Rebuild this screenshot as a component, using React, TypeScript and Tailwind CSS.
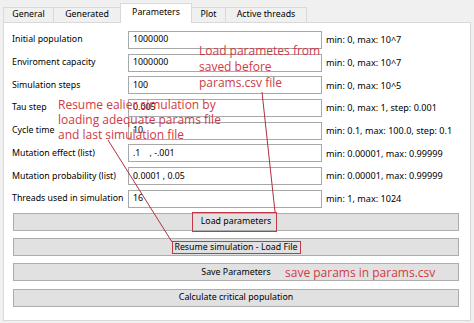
import React from 'react'

const rows = [
  { label: 'Initial population', value: '1000000', hint: 'min: 0, max: 10^7' },
  { label: 'Enviroment capacity', value: '1000000', hint: 'min: 0, max: 10^7' },
  { label: 'Simulation steps', value: '100', hint: 'min: 0, max: 10^5' },
  { label: 'Tau step', value: '0.005', hint: 'min: 0, max: 1, step: 0.001' },
  { label: 'Cycle time', value: '10', hint: 'min: 0.1, max: 100.0, step: 0.1' },
  { label: 'Mutation effect (list)', value: '.1    , -.001', hint: 'min: 0.00001, max: 0.99999' },
  { label: 'Mutation probability (list)', value: '0.0001 , 0.05', hint: 'min: 0.00001, max: 0.99999' },
  { label: 'Threads used in simulation', value: '16', hint: 'min: 1, max: 1024' },
]

const tabs = [
  { name: 'General', w: 'w-[51px]' },
  { name: 'Generated', w: 'w-[68px]' },
  { name: 'Parameters', w: 'w-[72px]' },
  { name: 'Plot', w: 'w-[35px]' },
  { name: 'Active threads', w: 'w-[82px]' },
]

const red = { fontFamily: '"Open Sans", "Noto Sans", sans-serif' }

export default function App() {
  return (
    <div
      className="relative w-[474px] h-[323px] bg-[#f0f0f0] overflow-hidden text-[8.8px] text-black"
      style={{ fontFamily: '"Noto Sans", "Open Sans", sans-serif' }}
    >
      {/* tab bar */}
      <div className="flex items-end h-[22px] pl-[3px]">
        {tabs.map((t) =>
          t.name === 'Parameters' ? (
            <div
              key={t.name}
              className={`${t.w} relative z-10 h-[20px] -mb-px -ml-px bg-white border border-b-0 border-[#d9d9d9] flex items-center justify-center pb-[2px]`}
            >
              {t.name}
            </div>
          ) : (
            <div
              key={t.name}
              className={`${t.w} h-[15px] bg-[#f0f0f0] border border-b-0 border-[#d9d9d9] -ml-px first:ml-0 flex items-center justify-center`}
            >
              {t.name}
            </div>
          )
        )}
      </div>

      {/* pane */}
      <div className="ml-[3px] w-[468px] h-[299px] bg-white border border-[#d9d9d9] pt-[8px] pl-[8px]">
        <div className="flex flex-col gap-[4.7px]">
          {rows.map((r) => (
            <div key={r.label} className="flex items-center h-[18px]">
              <div className="w-[116px] shrink-0 whitespace-nowrap">{r.label}</div>
              <div className="w-[194px] h-[18px] border border-[#a8a8a8] px-[4px] flex items-center whitespace-pre">
                {r.value}
              </div>
              <div className="pl-[4px] text-[9.1px] whitespace-nowrap">{r.hint}</div>
            </div>
          ))}
        </div>

        <div className="flex flex-col gap-[7.3px] mt-[5px] ml-[1px] w-[446px]">
          {['Load parameters', 'Resume simulation - Load File', 'Save Parameters', 'Calculate critical population'].map(
            (b) => (
              <div
                key={b}
                className="h-[18px] bg-[#e1e1e1] border border-[#adadad] flex items-center justify-center"
              >
                {b}
              </div>
            )
          )}
        </div>
      </div>

      {/* annotations */}
      <div className="absolute left-[199px] top-[43px] text-[12px] leading-[16px] text-[#cf3a43]" style={red}>
        <div>Load parametes from</div>
        <div>saved before</div>
        <div>params.csv file</div>
      </div>
      <div className="absolute left-[58px] top-[97px] text-[12px] leading-[15px] text-[#cf3a43]" style={red}>
        <div>Resume ealier simulation by</div>
        <div>loading adequate params file</div>
        <div>and last simulation file</div>
      </div>
      <div className="absolute left-[285px] top-[265px] text-[12px] leading-[16px] text-[#cf3a43]" style={red}>
        save params in params.csv
      </div>

      <div className="absolute left-[192px] top-[212px] w-[85px] h-[20px] border border-[#c0394a]" />
      <div className="absolute left-[172px] top-[241px] w-[129px] h-[13px] border border-[#c0394a]" />

      <svg className="absolute left-0 top-0" width="474" height="323">
        <line x1="262" y1="92" x2="275" y2="212" stroke="#b03040" strokeWidth="1" />
        <line x1="108" y1="140" x2="172" y2="242" stroke="#b03040" strokeWidth="1" />
      </svg>
    </div>
  )
}
